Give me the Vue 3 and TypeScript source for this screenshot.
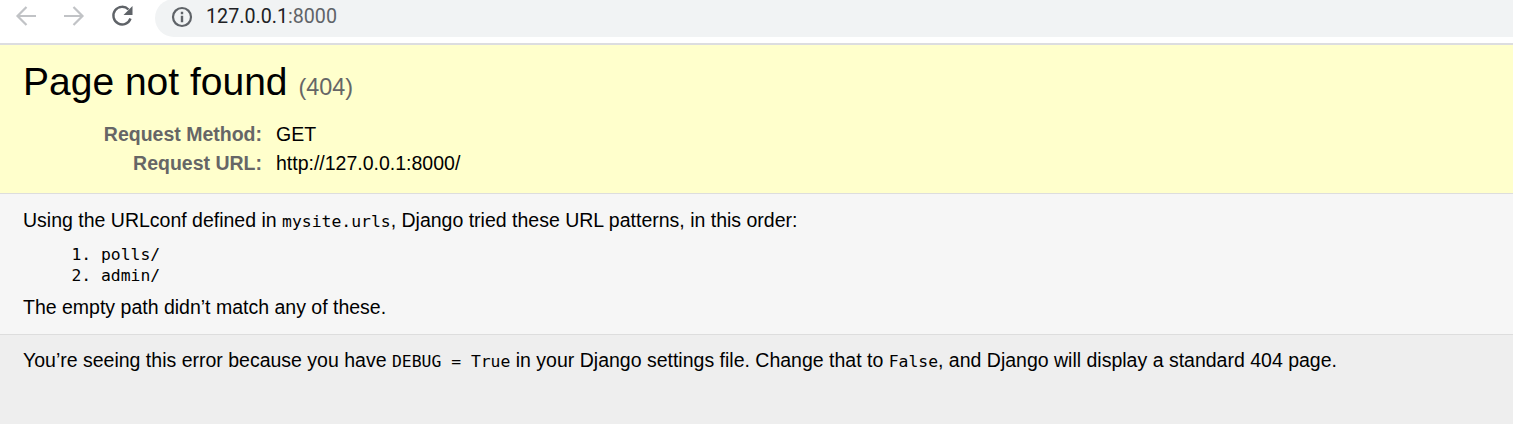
<script setup lang="ts">
const meta = [
  { label: 'Request Method:', value: 'GET' },
  { label: 'Request URL:', value: 'http://127.0.0.1:8000/' },
]
const patterns = ['polls/', 'admin/']
</script>

<template>
  <div class="page">
    <header class="toolbar">
      <button class="nav" aria-label="Back">
        <svg width="24" height="24" viewBox="0 0 24 24"><path d="M22 12H4M12.500 3 3.500 12l9 9" fill="none" stroke="#c1c3c6" stroke-width="2.200"/></svg>
      </button>
      <button class="nav" aria-label="Forward">
        <svg width="24" height="24" viewBox="0 0 24 24"><path d="M2 12h18M11.500 3l9 9-9 9" fill="none" stroke="#c1c3c6" stroke-width="2.200"/></svg>
      </button>
      <button class="nav" aria-label="Reload">
        <svg width="24" height="24" viewBox="0 0 24 24"><path d="M20.500 14.500A8.800 8.800 0 1 1 18.500 5.500" fill="none" stroke="#5f6368" stroke-width="2.400"/><path d="M22.500 2v9h-9z" fill="#5f6368"/></svg>
      </button>
      <div class="omnibox">
        <svg width="22" height="22" viewBox="0 0 22 22"><circle cx="11" cy="11" r="9" fill="none" stroke="#5f6368" stroke-width="2.200"/><path d="M9.800 9.800h2.400v6.400H9.800zM9.800 5.800h2.400v2.400H9.800z" fill="#5f6368"/></svg>
        <span class="url">127.0.0.1<span class="port">:8000</span></span>
      </div>
    </header>
    <section class="summary">
      <h1>Page not found <span>(404)</span></h1>
      <table>
        <tbody>
          <tr v-for="row in meta" :key="row.label">
            <th>{{ row.label }}</th>
            <td>{{ row.value }}</td>
          </tr>
        </tbody>
      </table>
    </section>
    <section class="info">
      <p>Using the URLconf defined in <code>mysite.urls</code>, Django tried these URL patterns, in this order:</p>
      <ol>
        <li v-for="p in patterns" :key="p">{{ p }}</li>
      </ol>
      <p>The empty path didn’t match any of these.</p>
    </section>
    <section class="explanation">
      <p>You’re seeing this error because you have <code>DEBUG = True</code> in your Django settings file. Change that to <code>False</code>, and Django will display a standard 404 page.</p>
    </section>
  </div>
</template>

<style>
html, body { margin: 0; background: #eee; }
</style>

<style scoped>
.page {
  height: 424px;
  display: flex;
  flex-direction: column;
  overflow: hidden;
  font-family: "Liberation Sans", Arial, sans-serif;
  font-size: 19.500px;
  color: #000;
}
.toolbar {
  height: 43px;
  flex: none;
  background: #fff;
  border-bottom: 2px solid #dcdde0;
  display: flex;
  align-items: flex-start;
  box-sizing: content-box;
}
.nav {
  width: 24px;
  height: 24px;
  padding: 0;
  margin: 4px 0 0 14px;
  border: 0;
  background: none;
  display: block;
  flex: none;
}
.nav + .nav { margin-left: 24px; }
.omnibox {
  margin: -1px 0 0 21px;
  flex: 1;
  height: 38px;
  box-sizing: border-box;
  background: #f1f3f4;
  border-radius: 19px 0 0 19px;
  display: flex;
  align-items: center;
  padding: 0 0 3px 16px;
  gap: 13px;
}
.url { font-family: Roboto, sans-serif; font-size: 19.700px; color: #202124; }
.port { color: #5f6368; }
.summary {
  flex: none;
  height: 149px;
  box-sizing: border-box;
  background: #ffc;
  padding: 14px 23px 0;
  border-bottom: 1px solid #ddd;
}
h1 { margin: 0; font-size: 39px; font-weight: 400; line-height: 45px; }
h1 span { font-size: 23.400px; color: #666; }
table { border-collapse: collapse; margin-top: 10px; }
th {
  width: 239px;
  padding: 0 14px 0 0;
  text-align: right;
  color: #666;
  font-weight: 700;
  line-height: 29px;
}
td { padding: 0; line-height: 29px; }
.info {
  flex: none;
  height: 141px;
  box-sizing: border-box;
  background: #f6f6f6;
  border-bottom: 1px solid #ddd;
  padding: 14px 23px 0;
}
p { margin: 0; line-height: 24px; }
code { font-family: "DejaVu Sans Mono", monospace; font-size: 16.400px; }
ol {
  margin: 10px 0 9px;
  padding: 0 0 0 78px;
  font-family: "DejaVu Sans Mono", monospace;
  font-size: 16.400px;
  line-height: 21px;
}
.explanation {
  flex: 1;
  background: #eee;
  padding: 13px 23px 0;
}
</style>
